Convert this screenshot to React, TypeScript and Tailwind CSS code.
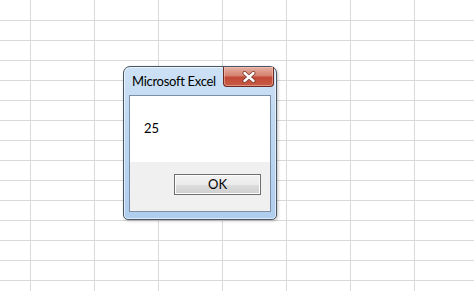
const cols = [31, 64, 64, 64, 64, 64, 64, 64]
const rows = Array.from({ length: 15 }, (_, i) => (i === 0 ? 21 : 20))

function SheetGrid() {
  return (
    <div className="flex flex-col">
      {rows.map((h, r) => (
        <div key={r} className="flex shrink-0" style={{ height: h }}>
          {cols.map((w, c) => (
            <div
              key={c}
              className="shrink-0 border-r border-b border-[#d9d9d9]"
              style={{ width: w }}
            />
          ))}
        </div>
      ))}
    </div>
  )
}

function CloseButton() {
  return (
    <div className="absolute left-[99px] top-0 flex h-[20px] w-[51px] items-center justify-center rounded-b-[4px] border border-t-0 border-[#6b2a22] bg-[linear-gradient(#e6b0a4_0%,#d4826f_45%,#c24a36_55%,#c85a45_100%)] shadow-[inset_0_0_0_1px_rgba(255,210,200,0.45)]">
      <svg width="14" height="12" viewBox="0 0 14 12">
        <path
          d="M2.5 2 L11.5 10 M11.5 2 L2.5 10"
          stroke="#7a3a30"
          strokeWidth="4"
          strokeLinecap="round"
        />
        <path
          d="M2.5 2 L11.5 10 M11.5 2 L2.5 10"
          stroke="#ffffff"
          strokeWidth="2.4"
          strokeLinecap="round"
        />
      </svg>
    </div>
  )
}

function MessageBox() {
  return (
    <div className="absolute left-[123px] top-[66px] flex h-[154px] w-[154px] flex-col rounded-t-[7px] rounded-b-[5px] border border-[#4a5563] bg-[linear-gradient(#cde1f5,#bdd7f1_40%,#afcdee)] shadow-[inset_0_0_0_1px_rgba(255,255,255,0.6),1px_1px_3px_rgba(0,0,0,0.25)] [font-family:Lato,'Noto_Sans',sans-serif]">
      <CloseButton />
      <div className="flex h-[28px] shrink-0 items-center pl-[8px] pt-[1px] text-[13px] tracking-[-0.3px] text-black">
        Microsoft Excel
      </div>
      <div className="mx-[5px] mb-[7px] flex flex-1 flex-col border border-[#7d8fa6]">
        <div className="flex h-[66px] shrink-0 items-center bg-white pl-[14px] text-[13px] text-black">
          25
        </div>
        <div className="flex flex-1 items-start justify-end bg-[#f0f0f0] pr-[9px] pt-[12px]">
          <button className="flex h-[21px] w-[87px] items-center justify-center border border-[#6f6f6f] bg-[linear-gradient(#f2f2f2,#ebebeb_50%,#dddddd_50%,#cfcfcf)] text-[13px] text-black shadow-[inset_0_0_0_1px_#fcfcfc]">
            OK
          </button>
        </div>
      </div>
    </div>
  )
}

export default function App() {
  return (
    <div className="relative h-[291px] w-[474px] overflow-hidden bg-white">
      <SheetGrid />
      <MessageBox />
    </div>
  )
}
